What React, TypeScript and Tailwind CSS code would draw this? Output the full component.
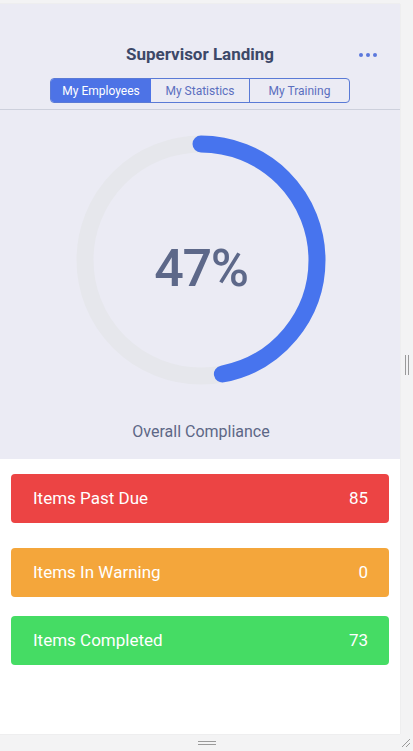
import React from 'react'

const stats = [
  { label: 'Items Past Due', value: 85, color: 'bg-[#ec4444]', gap: 'mt-[15px]' },
  { label: 'Items In Warning', value: 0, color: 'bg-[#f4a63b]', gap: 'mt-[25px]' },
  { label: 'Items Completed', value: 73, color: 'bg-[#45dc64]', gap: 'mt-[19px]' },
]

function Donut({ percent }: { percent: number }) {
  const r = 116
  const c = 2 * Math.PI * r
  return (
    <div className="relative w-[250px] h-[250px]">
      <svg width="250" height="250" viewBox="0 0 250 250">
        <circle cx="125" cy="125" r={r} fill="none" stroke="#e6e7ec" strokeWidth="17" />
        <circle
          cx="125"
          cy="125"
          r={r}
          fill="none"
          stroke="#4774ee"
          strokeWidth="17"
          strokeLinecap="round"
          strokeDasharray={`${(c * percent) / 100} ${c}`}
          transform="rotate(-90 125 125)"
        />
      </svg>
      <div className="absolute inset-0 flex items-center justify-center pt-[18px]">
        <span className="text-[52px] font-medium text-[#5d6889] tracking-tight">{percent}%</span>
      </div>
    </div>
  )
}

export default function App() {
  return (
    <div
      className="w-[413px] h-[751px] bg-[#f3f3f4] pt-[4px] flex flex-col"
      style={{ fontFamily: 'Roboto, "Noto Sans", sans-serif' }}
    >
      <div className="flex flex-1">
        <div className="w-[400px] h-[730px] bg-white flex flex-col shadow-[0_0_1px_rgba(0,0,0,0.12)]">
          <div className="bg-[#ebebf4] h-[455px] flex flex-col">
            {/* header */}
            <div className="relative h-[106px] border-b border-[#cdd0dc] flex flex-col items-center">
              <h1 className="mt-[39px] text-[17px] font-bold text-[#3c4868] leading-[22px]">Supervisor Landing</h1>
              <div className="absolute right-[23px] top-[49px] flex gap-[3px]">
                <span className="w-[4px] h-[4px] rounded-full bg-[#5b78dc]" />
                <span className="w-[4px] h-[4px] rounded-full bg-[#5b78dc]" />
                <span className="w-[4px] h-[4px] rounded-full bg-[#5b78dc]" />
              </div>
              <div className="mt-[13px] flex h-[25px] border border-[#5a7ad6] rounded-[4px] overflow-hidden text-[12px]">
                <button className="w-[100px] bg-[#4d73e6] text-white">My Employees</button>
                <button className="w-[99px] text-[#5b6fbf] border-r border-[#5a7ad6]">My Statistics</button>
                <button className="w-[99px] text-[#5b6fbf]">My Training</button>
              </div>
            </div>
            {/* chart */}
            <div className="flex flex-col items-center pt-[25px] pl-[2px]">
              <Donut percent={47} />
              <p className="mt-[35px] text-[16px] text-[#5d6786]">Overall Compliance</p>
            </div>
          </div>
          <div className="px-[11px] flex flex-col">
            {stats.map(s => (
              <div
                key={s.label}
                className={`${s.gap} ${s.color} h-[49px] rounded-[4px] flex items-center justify-between pl-[22px] pr-[21px] text-white text-[17px]`}
              >
                <span>{s.label}</span>
                <span>{s.value}</span>
              </div>
            ))}
          </div>
        </div>
        <div className="flex-1 flex items-center justify-center">
          <div className="mt-[-8px] flex gap-[2px] h-[20px]">
            <span className="w-[1px] bg-[#9a9a9a]" />
            <span className="w-[1px] bg-[#9a9a9a]" />
          </div>
        </div>
      </div>
      <div className="relative h-[17px] flex items-center justify-center">
        <div className="w-[400px] flex justify-center">
          <div className="flex flex-col gap-[2px] w-[18px]">
            <span className="h-[1px] bg-[#9a9a9a]" />
            <span className="h-[1px] bg-[#9a9a9a]" />
          </div>
        </div>
        <svg className="absolute right-[2px] bottom-[3px]" width="10" height="10" viewBox="0 0 10 10">
          <line x1="1" y1="9" x2="9" y2="1" stroke="#9a9a9a" strokeWidth="1" />
          <line x1="5" y1="9" x2="9" y2="5" stroke="#9a9a9a" strokeWidth="1" />
        </svg>
      </div>
    </div>
  )
}
